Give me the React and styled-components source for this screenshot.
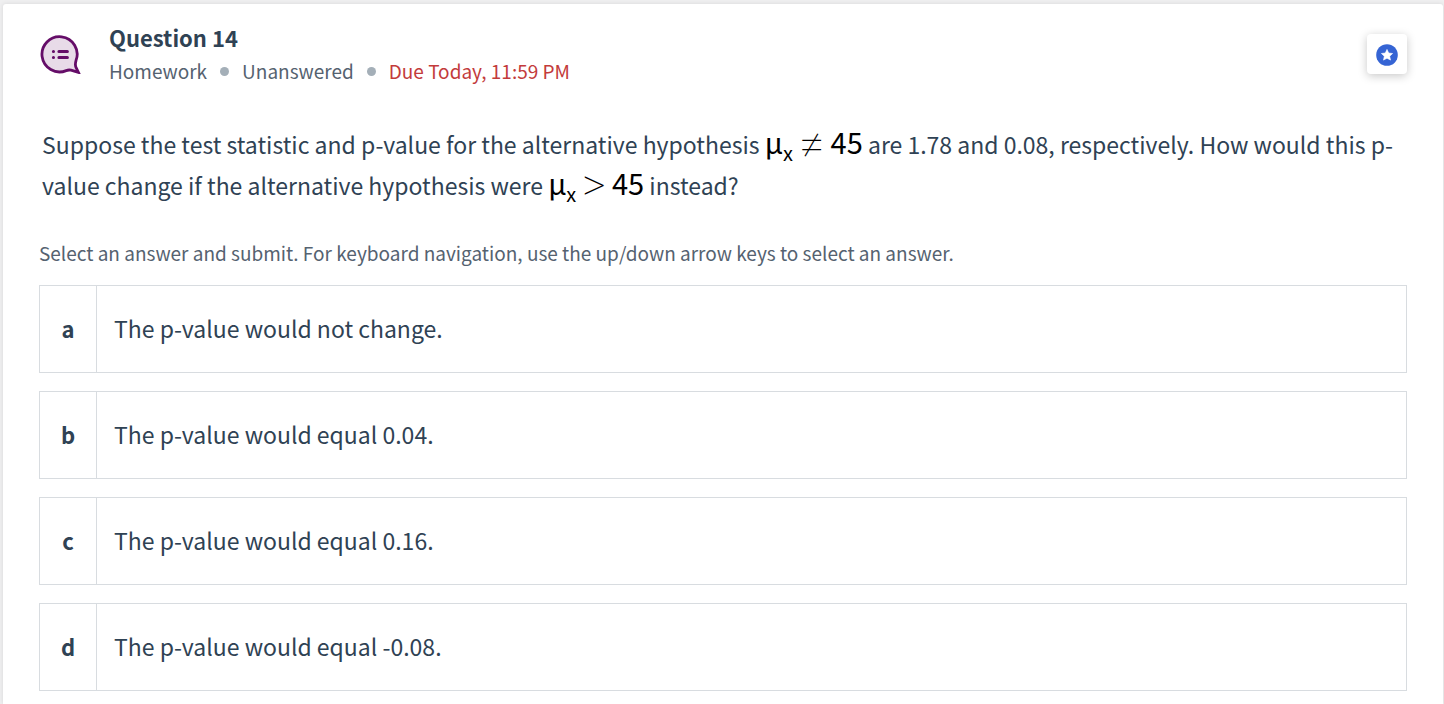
import { useState } from "react"
import styled, { createGlobalStyle } from "styled-components"

const GlobalStyle = createGlobalStyle`
	* {
		box-sizing: border-box;
	}
	body {
		margin: 0;
		background: #efeff0;
		color: #2f4254;
		font-family: "Noto Sans CJK SC", "Noto Sans", sans-serif;
	}
`
const Main = styled.main`
	min-height: 100vh;
	padding: 4px 1px 0 3px;
	display: flex;
	flex-direction: column;
`
const Card = styled.div`
	flex: 1;
	padding: 17px 36px 13px;
	display: flex;
	flex-direction: column;
	background: white;
	border-radius: 3px 3px 0 0;
	box-shadow: 0 0 4px rgba(0, 0, 0, 0.1);
`
const Header = styled.header`
	display: flex;
	align-items: center;
	gap: 28px;
`
const HeaderText = styled.div`
	flex: 1;
	display: flex;
	flex-direction: column;
	gap: 2px;
`
const Title = styled.h1`
	margin: 0;
	font-size: 22px;
	line-height: 32px;
	font-weight: 700;
`
const Meta = styled.div`
	display: flex;
	align-items: center;
	gap: 13px;
	font-size: 19px;
	line-height: 32px;
	color: #556270;
`
const Dot = styled.span`
	width: 9px;
	height: 9px;
	border-radius: 50%;
	background: #a4afb8;
`
const Due = styled.span`
	color: #c33b3b;
`
const StarButton = styled.button`
	width: 40px;
	height: 40px;
	padding: 2px 0 0;
	display: flex;
	justify-content: center;
	align-items: center;
	background: white;
	border: none;
	border-radius: 4px;
	box-shadow: 0 2px 10px rgba(0, 0, 0, 0.22);
	cursor: pointer;
`
const Question = styled.p`
	margin: 37px 0 0;
	padding: 0 3px;
	font-size: 23px;
	line-height: 41px;
`
const MathText = styled.span`
	color: black;
	font-size: 29px;
	line-height: 1;
	white-space: nowrap;
`
const Sub = styled.sub`
	font-size: 20px;
	line-height: 0;
`
const Operator = styled.span`
	margin: 0 6px;
	font-family: Roboto, sans-serif;
	font-size: 46px;
	font-weight: 100;
	line-height: 0;
	vertical-align: -6px;
`
const Answers = styled.fieldset`
	margin: 31px 0 0;
	padding: 0;
	border: none;
	min-width: 0;
`
const Hint = styled.legend`
	padding: 0;
	margin-bottom: 16px;
	font-size: 19px;
	line-height: 32px;
	color: #556270;
`
const AnswerList = styled.div`
	display: flex;
	flex-direction: column;
	gap: 18px;
`
const Answer = styled.label`
	min-height: 88px;
	display: flex;
	border: 1px solid ${(props) => (props.$selected ? "#3564d4" : "#d8dce0")};
	cursor: pointer;
	&:focus-within {
		outline: 2px solid #3564d4;
	}
`
const Radio = styled.input`
	position: absolute;
	opacity: 0;
	pointer-events: none;
`
const Letter = styled.span`
	width: 57px;
	padding-bottom: 2px;
	display: flex;
	justify-content: center;
	align-items: center;
	border-right: 1px solid #d8dce0;
	font-size: 22px;
	line-height: 32px;
	font-weight: 700;
`
const AnswerText = styled.span`
	flex: 1;
	padding: 0 17px 2px;
	display: flex;
	align-items: center;
	font-size: 23px;
	line-height: 32px;
`

const QuestionIcon = () => (
	<svg width="42" height="40" viewBox="-1 -1 42 40" aria-hidden="true">
		<path
			d="M36 25.6 A17.6 17.6 0 1 0 26.2 35.6 Q28.6 34.6 31 35.2 L38.4 37.4 L36 32.4 Q34.8 29.6 36 25.6 Z"
			fill="#e8dbe8"
			stroke="#650d68"
			strokeWidth="2.8"
		/>
		<g stroke="#650d68" strokeWidth="3" strokeLinecap="round">
			<path d="M13.4 16.4h.1M13.4 22.5h.1M18.9 16.4h8.5M18.9 22.5h8.5" />
		</g>
	</svg>
)

const StarIcon = () => (
	<svg width="22" height="22" viewBox="0 0 22 22" aria-hidden="true">
		<circle cx="11" cy="11" r="10.8" fill="#3564d4" />
		<path
			d="M11 5.4l1.7 3.6 3.9.5-2.9 2.7.8 3.9-3.5-1.9-3.5 1.9.8-3.9-2.9-2.7 3.9-.5z"
			fill="white"
			stroke="white"
			strokeWidth="0.6"
			strokeLinejoin="round"
		/>
	</svg>
)

const Hypothesis = ({ operator }) => (
	<MathText>
		μ<Sub>x</Sub>
		<Operator>{operator}</Operator>
		45
	</MathText>
)

const answers = [
	{ letter: "a", text: "The p-value would not change." },
	{ letter: "b", text: "The p-value would equal 0.04." },
	{ letter: "c", text: "The p-value would equal 0.16." },
	{ letter: "d", text: "The p-value would equal -0.08." },
]

const App = () => {
	const [selected, setSelected] = useState("")

	return (
		<Main>
			<GlobalStyle />
			<Card>
				<Header>
					<QuestionIcon />
					<HeaderText>
						<Title>Question 14</Title>
						<Meta>
							<span>Homework</span>
							<Dot />
							<span>Unanswered</span>
							<Dot />
							<Due>Due Today, 11:59 PM</Due>
						</Meta>
					</HeaderText>
					<StarButton aria-label="Bookmark question">
						<StarIcon />
					</StarButton>
				</Header>
				<Question>
					Suppose the test statistic and p-value for the alternative hypothesis{" "}
					<Hypothesis operator="≠" /> are 1.78 and 0.08, respectively. How would
					this p-value change if the alternative hypothesis were{" "}
					<Hypothesis operator=">" /> instead?
				</Question>
				<Answers>
					<Hint>
						Select an answer and submit. For keyboard navigation, use the up/down
						arrow keys to select an answer.
					</Hint>
					<AnswerList>
						{answers.map((el) => (
							<Answer key={el.letter} $selected={selected === el.letter}>
								<Radio
									type="radio"
									name="answer"
									value={el.letter}
									checked={selected === el.letter}
									onChange={() => setSelected(el.letter)}
								/>
								<Letter>{el.letter}</Letter>
								<AnswerText>{el.text}</AnswerText>
							</Answer>
						))}
					</AnswerList>
				</Answers>
			</Card>
		</Main>
	)
}
export default App
